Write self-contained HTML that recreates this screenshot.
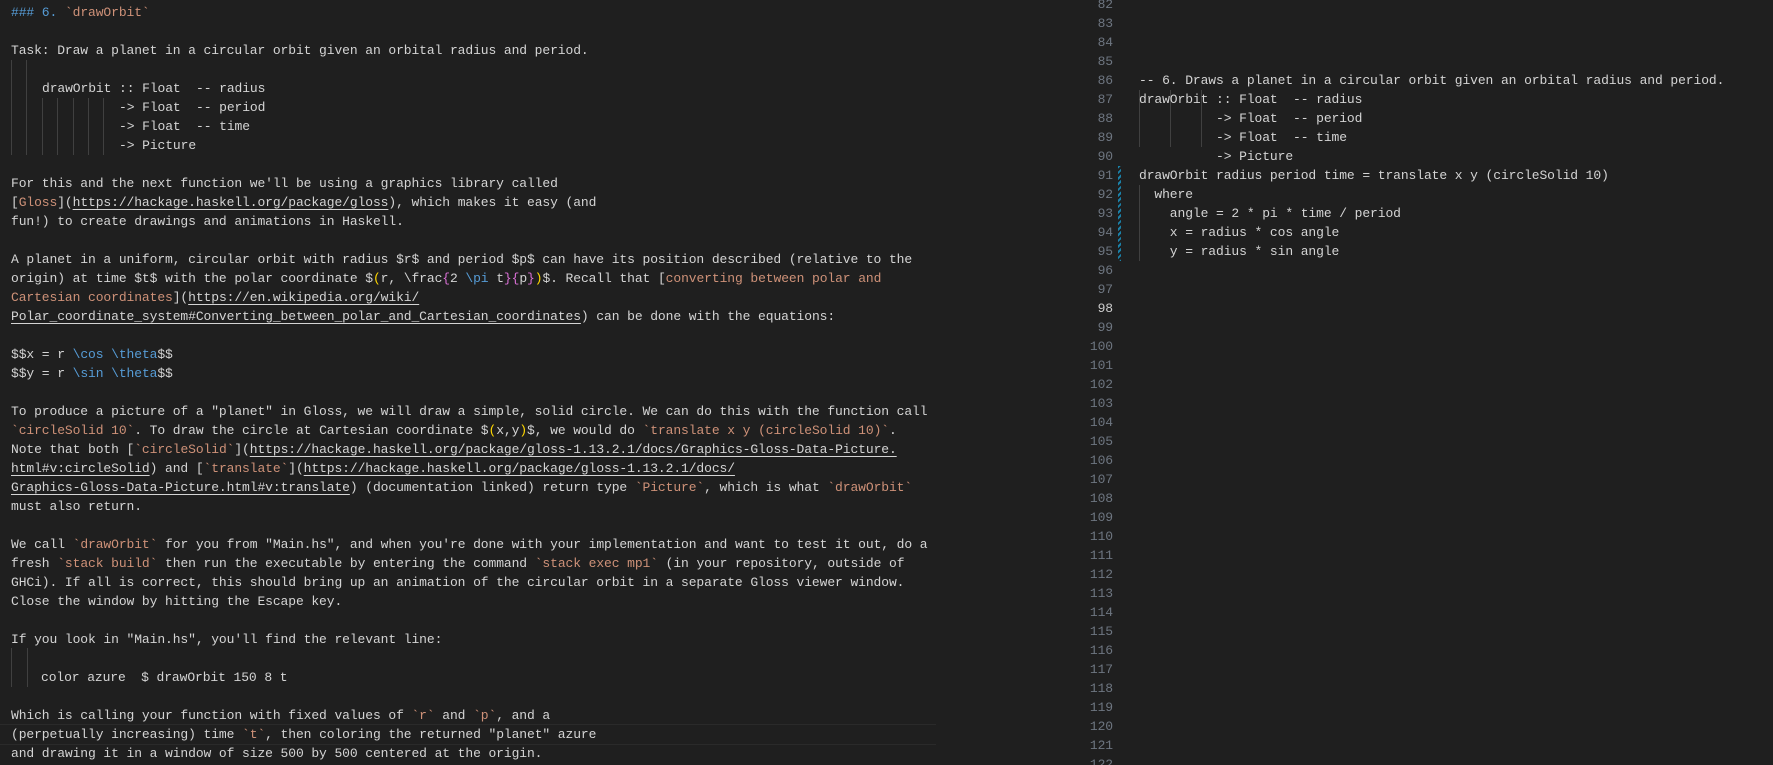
<!DOCTYPE html>
<html><head><meta charset="utf-8"><style>
html,body{margin:0;padding:0;background:#1f1f1f;width:1773px;height:765px;overflow:hidden;}
body{position:relative;font-family:"Liberation Mono",monospace;font-size:13px;letter-spacing:-0.1px;color:#d4d4d4;}
.l{position:absolute;left:11px;height:19px;line-height:19px;white-space:pre;}
.r{position:absolute;left:1139px;height:19px;line-height:19px;white-space:pre;}
.n{position:absolute;left:1070px;width:43px;text-align:right;height:19px;line-height:19px;color:#6e7681;}
.b{color:#569cd6}.o{color:#ce9178}.y{color:#ffd700}.p{color:#da70d6}.u{text-decoration:underline;text-underline-offset:3px}
.g{position:absolute;width:1px;background:#404040;}
</style></head><body>
<div style="position:absolute;left:0;top:724px;width:936px;height:19px;border-top:1px solid #2a2a2a;border-bottom:1px solid #2a2a2a;"></div>
<!-- left guides -->
<div class="g" style="left:11px;top:60px;height:95px"></div>
<div class="g" style="left:26px;top:60px;height:95px"></div>
<div class="g" style="left:42px;top:98px;height:57px"></div>
<div class="g" style="left:57px;top:98px;height:57px"></div>
<div class="g" style="left:73px;top:98px;height:57px"></div>
<div class="g" style="left:88px;top:98px;height:57px"></div>
<div class="g" style="left:103px;top:98px;height:57px"></div>
<div class="g" style="left:11px;top:648px;height:39px"></div>
<div class="g" style="left:27px;top:648px;height:39px"></div>

<div class="l b" style="top:3px">### 6. <span class="o">`drawOrbit`</span></div>
<div class="l" style="top:41px">Task: Draw a planet in a circular orbit given an orbital radius and period.</div>
<div class="l" style="top:79px;left:42px">drawOrbit :: Float  -- radius</div>
<div class="l" style="top:98px;left:42px">          -&gt; Float  -- period</div>
<div class="l" style="top:117px;left:42px">          -&gt; Float  -- time</div>
<div class="l" style="top:136px;left:42px">          -&gt; Picture</div>
<div class="l" style="top:174px">For this and the next function we'll be using a graphics library called</div>
<div class="l" style="top:193px">[<span class="o">Gloss</span>](<span class="u">https://hackage.haskell.org/package/gloss</span>), which makes it easy (and</div>
<div class="l" style="top:212px">fun!) to create drawings and animations in Haskell.</div>
<div class="l" style="top:250px">A planet in a uniform, circular orbit with radius $r$ and period $p$ can have its position described (relative to the</div>
<div class="l" style="top:269px">origin) at time $t$ with the polar coordinate $<span class="y">(</span>r, \frac<span class="p">{</span>2 <span class="b">\pi</span> t<span class="p">}{</span>p<span class="p">}</span><span class="y">)</span>$. Recall that [<span class="o">converting between polar and</span></div>
<div class="l" style="top:288px"><span class="o">Cartesian coordinates</span>](<span class="u">https://en.wikipedia.org/wiki/</span></div>
<div class="l" style="top:307px"><span class="u">Polar_coordinate_system#Converting_between_polar_and_Cartesian_coordinates</span>) can be done with the equations:</div>
<div class="l" style="top:345px">$$x = r <span class="b">\cos</span> <span class="b">\theta</span>$$</div>
<div class="l" style="top:364px">$$y = r <span class="b">\sin</span> <span class="b">\theta</span>$$</div>
<div class="l" style="top:402px">To produce a picture of a "planet" in Gloss, we will draw a simple, solid circle. We can do this with the function call</div>
<div class="l" style="top:421px"><span class="o">`circleSolid 10`</span>. To draw the circle at Cartesian coordinate $<span class="y">(</span>x,y<span class="y">)</span>$, we would do <span class="o">`translate x y (circleSolid 10)`</span>.</div>
<div class="l" style="top:440px">Note that both [<span class="o">`circleSolid`</span>](<span class="u">https://hackage.haskell.org/package/gloss-1.13.2.1/docs/Graphics-Gloss-Data-Picture.</span></div>
<div class="l" style="top:459px"><span class="u">html#v:circleSolid</span>) and [<span class="o">`translate`</span>](<span class="u">https://hackage.haskell.org/package/gloss-1.13.2.1/docs/</span></div>
<div class="l" style="top:478px"><span class="u">Graphics-Gloss-Data-Picture.html#v:translate</span>) (documentation linked) return type <span class="o">`Picture`</span>, which is what <span class="o">`drawOrbit`</span></div>
<div class="l" style="top:497px">must also return.</div>
<div class="l" style="top:535px">We call <span class="o">`drawOrbit`</span> for you from "Main.hs", and when you're done with your implementation and want to test it out, do a</div>
<div class="l" style="top:554px">fresh <span class="o">`stack build`</span> then run the executable by entering the command <span class="o">`stack exec mp1`</span> (in your repository, outside of</div>
<div class="l" style="top:573px">GHCi). If all is correct, this should bring up an animation of the circular orbit in a separate Gloss viewer window.</div>
<div class="l" style="top:592px">Close the window by hitting the Escape key.</div>
<div class="l" style="top:630px">If you look in "Main.hs", you'll find the relevant line:</div>
<div class="l" style="top:668px;left:41px">color azure  $ drawOrbit 150 8 t</div>
<div class="l" style="top:706px">Which is calling your function with fixed values of <span class="o">`r`</span> and <span class="o">`p`</span>, and a</div>
<div class="l" style="top:725px">(perpetually increasing) time <span class="o">`t`</span>, then coloring the returned "planet" azure</div>
<div class="l" style="top:744px">and drawing it in a window of size 500 by 500 centered at the origin.</div>

<!-- right editor -->
<div class="g" style="left:1139px;top:90px;height:57px"></div>
<div class="g" style="left:1170px;top:90px;height:57px"></div>
<div class="g" style="left:1201px;top:90px;height:57px"></div>
<div class="g" style="left:1139px;top:185px;height:76px"></div>
<div style="position:absolute;left:1118px;top:166px;width:3px;height:95px;background:repeating-linear-gradient(135deg,#1b81a8 0 2px,#1f1f1f 2px 4px);"></div>
<div class="n" style="top:-5px">82</div><div class="n" style="top:14px">83</div><div class="n" style="top:33px">84</div><div class="n" style="top:52px">85</div><div class="n" style="top:71px">86</div><div class="n" style="top:90px">87</div><div class="n" style="top:109px">88</div><div class="n" style="top:128px">89</div><div class="n" style="top:147px">90</div><div class="n" style="top:166px">91</div><div class="n" style="top:185px">92</div><div class="n" style="top:204px">93</div><div class="n" style="top:223px">94</div><div class="n" style="top:242px">95</div><div class="n" style="top:261px">96</div><div class="n" style="top:280px">97</div><div class="n" style="top:299px;color:#cccccc">98</div><div class="n" style="top:318px">99</div><div class="n" style="top:337px">100</div><div class="n" style="top:356px">101</div><div class="n" style="top:375px">102</div><div class="n" style="top:394px">103</div><div class="n" style="top:413px">104</div><div class="n" style="top:432px">105</div><div class="n" style="top:451px">106</div><div class="n" style="top:470px">107</div><div class="n" style="top:489px">108</div><div class="n" style="top:508px">109</div><div class="n" style="top:527px">110</div><div class="n" style="top:546px">111</div><div class="n" style="top:565px">112</div><div class="n" style="top:584px">113</div><div class="n" style="top:603px">114</div><div class="n" style="top:622px">115</div><div class="n" style="top:641px">116</div><div class="n" style="top:660px">117</div><div class="n" style="top:679px">118</div><div class="n" style="top:698px">119</div><div class="n" style="top:717px">120</div><div class="n" style="top:736px">121</div><div class="n" style="top:755px">122</div>
<div class="r" style="top:71px">-- 6. Draws a planet in a circular orbit given an orbital radius and period.</div>
<div class="r" style="top:90px">drawOrbit :: Float  -- radius</div>
<div class="r" style="top:109px">          -&gt; Float  -- period</div>
<div class="r" style="top:128px">          -&gt; Float  -- time</div>
<div class="r" style="top:147px">          -&gt; Picture</div>
<div class="r" style="top:166px">drawOrbit radius period time = translate x y (circleSolid 10)</div>
<div class="r" style="top:185px">  where</div>
<div class="r" style="top:204px">    angle = 2 * pi * time / period</div>
<div class="r" style="top:223px">    x = radius * cos angle</div>
<div class="r" style="top:242px">    y = radius * sin angle</div>
</body></html>
